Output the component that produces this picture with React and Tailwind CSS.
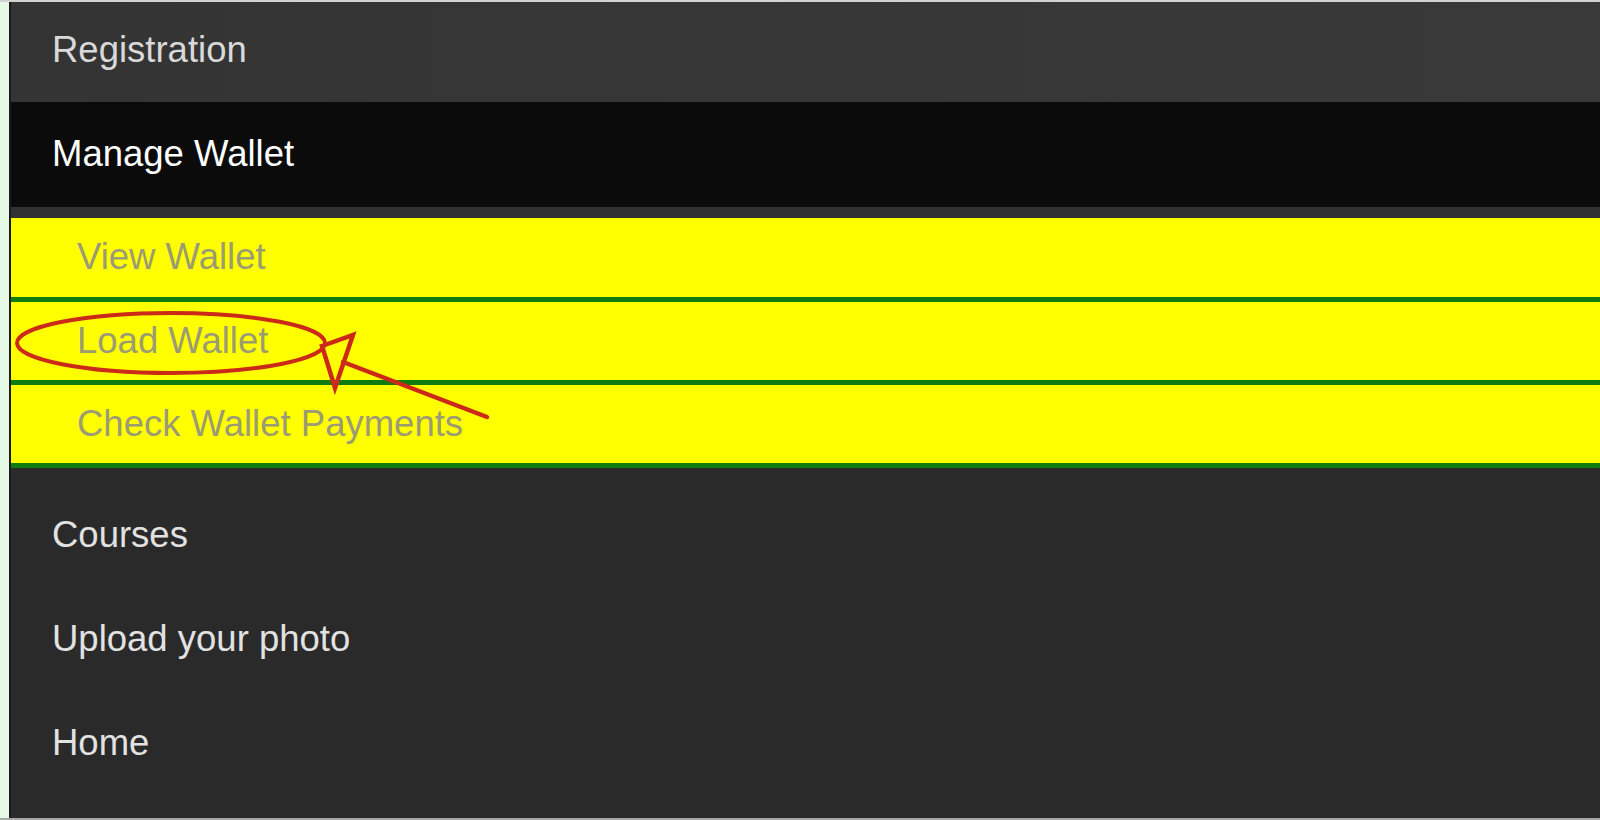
import React from "react";

const subItems = ["View Wallet", "Load Wallet", "Check Wallet Payments"];
const lowerItems = ["Courses", "Upload your photo", "Home"];

// hand-drawn annotation that sits over the menu
const Annotation = () => (
  <svg
    className="absolute inset-0 pointer-events-none"
    width="1600"
    height="820"
    viewBox="0 0 1600 820"
  >
    <ellipse
      cx="171"
      cy="343"
      rx="154"
      ry="30"
      fill="none"
      stroke="#cc2a18"
      strokeWidth="4"
    />
    <polygon
      points="322,346 353,335 335,388"
      fill="none"
      stroke="#cc2a18"
      strokeWidth="4.5"
      strokeLinejoin="miter"
    />
    <line
      x1="343"
      y1="362"
      x2="487"
      y2="417"
      stroke="#cc2a18"
      strokeWidth="4.5"
      strokeLinecap="round"
    />
  </svg>
);

const App = () => {
  return (
    <div
      className="relative w-[1600px] h-[820px] overflow-hidden flex flex-col bg-[#d4d4d4]"
      style={{ fontFamily: '"Liberation Sans", Arial, sans-serif' }}
    >
      <div className="h-[2px] bg-[#d2d2d2]" />

      <div className="flex flex-1 min-h-0">
        {/* Left strip */}
        <div className="w-[9px] bg-[#e6f9e6]" />

        {/* Menu */}
        <div className="flex-1 flex flex-col border-l-2 border-[#1b1b1b] text-[36.5px] leading-none">
          <div className="h-[100px] pb-1 flex items-center pl-[41px] bg-gradient-to-r from-[#343434] to-[#393939] text-[#d9d9d9]">
            Registration
          </div>

          <div className="h-[105px] flex items-center pl-[41px] bg-[#0b0b0b] text-white">
            Manage Wallet
          </div>

          <div className="h-[11px] bg-[#323232]" />

          {subItems.map((item, i) => (
            <div
              key={item}
              className={`${
                i === 0 ? "h-[84px]" : "h-[83px]"
              } flex items-center pl-[66px] bg-[#ffff00] border-b-[5px] border-[#0e7c0e] text-[#9b9b74]`}
            >
              {item}
            </div>
          ))}

          <div className="flex-1 bg-[#2a2a2a] pt-[15px] flex flex-col">
            {lowerItems.map((item) => (
              <div
                key={item}
                className="h-[104px] flex items-center pl-[41px] text-[#e2e2e2]"
              >
                {item}
              </div>
            ))}
          </div>
        </div>
      </div>

      <div className="h-[2px] bg-[#a8a8a8]" />

      <Annotation />
    </div>
  );
};

export default App;
